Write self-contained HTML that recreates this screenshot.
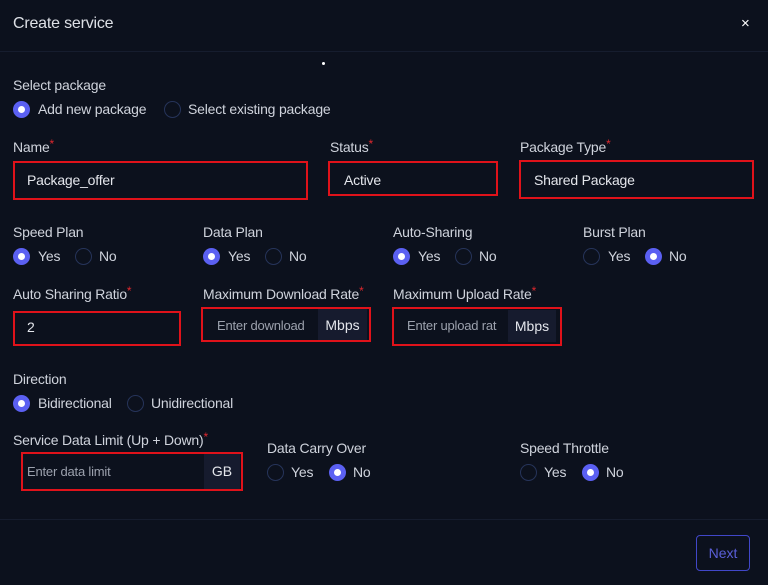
<!DOCTYPE html><html><head><style>
body{margin:0;width:768px;height:585px;background:#0c111d;font-family:"Liberation Sans",sans-serif;color:#d5d8e0;position:relative;overflow:hidden;font-size:14px}
.a{position:absolute;white-space:nowrap}
.l{font-size:14px;color:#cfd3dc;letter-spacing:-0.2px}
.l i{color:#e0282e;font-style:normal;font-size:12px;vertical-align:top;position:relative;top:-2px}
.r{position:absolute;width:15px;height:15px;border-radius:50%;border:1px solid #26345a;box-sizing:content-box}
.r.on{background:#5b60f2;border-color:#5b60f2}
.r.on:after{content:"";position:absolute;left:4px;top:4px;width:7px;height:7px;border-radius:50%;background:#fff}
.b{position:absolute;border:2px solid #e0121a;box-sizing:border-box}
.t{position:absolute;font-size:14px;color:#e4e6ec;letter-spacing:-0.2px}
.ad{position:absolute;background:#161b2e;color:#e4e6ec;font-size:14px;text-align:center}
.ph{position:absolute;color:#9ca1ad;font-size:13px;letter-spacing:-0.2px}
</style></head><body>
<div class="a" style="left:13px;top:15px;font-size:16px;color:#dde0e6;letter-spacing:-0.2px">Create service</div>
<div class="a" style="left:741px;top:15px;font-size:15px;color:#fff">×</div>
<div style="position:absolute;left:0;top:51px;width:768px;height:1px;background:#161d2e"></div>
<div style="position:absolute;left:322px;top:62px;width:3px;height:3px;border-radius:50%;background:#fff"></div>

<div class="a l" style="left:13px;top:77px">Select package</div>
<div class="r on" style="left:13px;top:101px"></div><div class="a l" style="left:38px;top:101px">Add new package</div>
<div class="r" style="left:164px;top:101px"></div><div class="a l" style="left:188px;top:101px">Select existing package</div>

<div class="a l" style="left:13px;top:139px">Name<i>*</i></div>
<div class="a l" style="left:330px;top:139px">Status<i>*</i></div>
<div class="a l" style="left:520px;top:139px">Package Type<i>*</i></div>
<div class="b" style="left:13px;top:161px;width:295px;height:39px"></div><div class="t" style="left:27px;top:172px">Package_offer</div>
<div class="b" style="left:328px;top:161px;width:170px;height:35px"></div><div class="t" style="left:344px;top:172px">Active</div>
<div class="b" style="left:519px;top:160px;width:235px;height:39px"></div><div class="t" style="left:534px;top:172px">Shared Package</div>

<div class="a l" style="left:13px;top:224px">Speed Plan</div>
<div class="a l" style="left:203px;top:224px">Data Plan</div>
<div class="a l" style="left:393px;top:224px">Auto-Sharing</div>
<div class="a l" style="left:583px;top:224px">Burst Plan</div>
<div class="r on" style="left:13px;top:248px"></div><div class="a l" style="left:38px;top:248px">Yes</div>
<div class="r" style="left:75px;top:248px"></div><div class="a l" style="left:99px;top:248px">No</div>
<div class="r on" style="left:203px;top:248px"></div><div class="a l" style="left:228px;top:248px">Yes</div>
<div class="r" style="left:265px;top:248px"></div><div class="a l" style="left:289px;top:248px">No</div>
<div class="r on" style="left:393px;top:248px"></div><div class="a l" style="left:418px;top:248px">Yes</div>
<div class="r" style="left:455px;top:248px"></div><div class="a l" style="left:479px;top:248px">No</div>
<div class="r" style="left:583px;top:248px"></div><div class="a l" style="left:608px;top:248px">Yes</div>
<div class="r on" style="left:645px;top:248px"></div><div class="a l" style="left:669px;top:248px">No</div>

<div class="a l" style="left:13px;top:286px">Auto Sharing Ratio<i>*</i></div>
<div class="a l" style="left:203px;top:286px">Maximum Download Rate<i>*</i></div>
<div class="a l" style="left:393px;top:286px">Maximum Upload Rate<i>*</i></div>
<div class="b" style="left:13px;top:311px;width:168px;height:35px"></div><div class="t" style="left:27px;top:319px">2</div>
<div class="ad" style="left:318px;top:309px;width:49px;height:31px;line-height:33px">Mbps</div>
<div class="ph" style="left:217px;top:318px">Enter download</div>
<div class="b" style="left:201px;top:307px;width:170px;height:35px"></div>
<div class="ad" style="left:508px;top:310px;width:48px;height:32px;line-height:32px">Mbps</div>
<div class="ph" style="left:407px;top:318px">Enter upload rat</div>
<div class="b" style="left:392px;top:307px;width:170px;height:39px"></div>

<div class="a l" style="left:13px;top:371px">Direction</div>
<div class="r on" style="left:13px;top:395px"></div><div class="a l" style="left:38px;top:395px">Bidirectional</div>
<div class="r" style="left:127px;top:395px"></div><div class="a l" style="left:151px;top:395px">Unidirectional</div>

<div class="a l" style="left:13px;top:432px">Service Data Limit (Up + Down)<i>*</i></div>
<div class="ad" style="left:204px;top:454px;width:36px;height:35px;line-height:35px">GB</div>
<div class="ph" style="left:27px;top:464px">Enter data limit</div>
<div class="b" style="left:21px;top:452px;width:222px;height:39px"></div>
<div class="a l" style="left:267px;top:440px">Data Carry Over</div>
<div class="a l" style="left:520px;top:440px">Speed Throttle</div>
<div class="r" style="left:267px;top:464px"></div><div class="a l" style="left:291px;top:464px">Yes</div>
<div class="r on" style="left:329px;top:464px"></div><div class="a l" style="left:353px;top:464px">No</div>
<div class="r" style="left:520px;top:464px"></div><div class="a l" style="left:544px;top:464px">Yes</div>
<div class="r on" style="left:582px;top:464px"></div><div class="a l" style="left:606px;top:464px">No</div>

<div style="position:absolute;left:0;top:519px;width:768px;height:1px;background:#161d2e"></div>
<div style="position:absolute;left:696px;top:535px;width:54px;height:36px;box-sizing:border-box;border:1.5px solid #4147c8;border-radius:4px;color:#5a5fd8;font-size:14px;text-align:center;line-height:35px">Next</div>
</body></html>
